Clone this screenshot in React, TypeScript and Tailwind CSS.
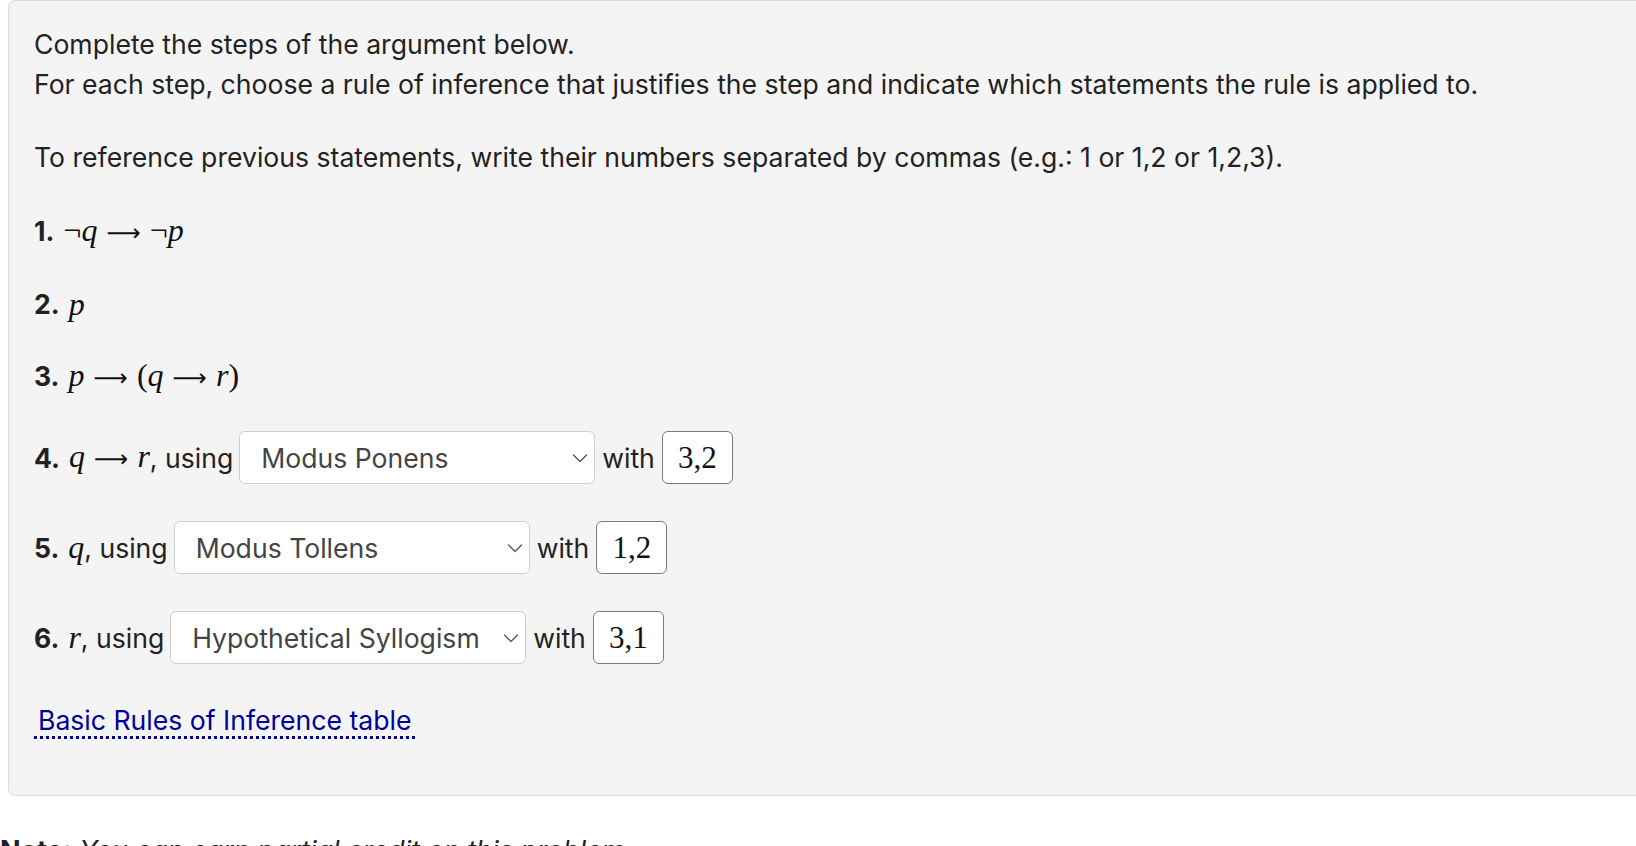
import React from 'react';

const V = ({ c }: { c: string }) => <span className="italic">{c}</span>;
const Arrow = () => (
  <span className="mx-[9px] font-['DejaVu_Sans',sans-serif] text-[24px] not-italic">⟶</span>
);
const Math = ({ children }: { children: React.ReactNode }) => (
  <span className="font-['Liberation_Serif',serif] text-[32px] text-[#111]">{children}</span>
);

interface StepProps {
  n: number;
  expr: React.ReactNode;
  rule: string;
  refs: string;
}

const Chevron = () => (
  <svg className="absolute right-[7px] top-1/2 -translate-y-1/2 w-[16px] h-[16px] pointer-events-none" viewBox="0 0 16 16" fill="none" stroke="#555" strokeWidth={1.3} strokeLinecap="round" strokeLinejoin="round">
    <path d="M1.5 5L8 11.5 14.5 5" />
  </svg>
);

const Step: React.FC<StepProps> = ({ n, expr, rule, refs }) => (
  <div className="flex items-center h-[53px]">
    <span className="font-bold">{n}.</span>
    <span className="ml-[9px]">{expr}</span>
    <span>, using</span>
    <div className="relative ml-[6px]">
      <select
        defaultValue={rule}
        className="appearance-none w-[356px] h-[53px] bg-white border-[1.5px] border-[#cfcfcf] rounded-[6px] pl-[21px] pr-8 text-[26.6px] text-[#444] font-['Inter',sans-serif] outline-none"
      >
        <option>{rule}</option>
      </select>
      <Chevron />
    </div>
    <span className="ml-[7px]">with</span>
    <input
      readOnly
      value={refs}
      className="ml-[7px] w-[71px] h-[53px] bg-white border-[1.5px] border-[#7a7a7a] rounded-[6px] text-center font-['Liberation_Serif',serif] text-[31px] text-[#111] outline-none"
    />
  </div>
);

export default function App() {
  return (
    <div className="w-[1636px] h-[846px] overflow-hidden bg-white font-['Inter',sans-serif] text-[26.6px] leading-[40px] text-[#222]">
      <div className="pl-2">
        <div className="w-[1680px] bg-[#f4f4f4] border-[1.5px] border-[#dcdcdc] rounded-[7px] pl-[25px] pt-[23px] pb-[54px] flex flex-col">
          <p>
            Complete the steps of the argument below.
            <br />
            For each step, choose a rule of inference that justifies the step and indicate which statements the rule is applied to.
          </p>
          <p className="mt-[33px]">
            To reference previous statements, write their numbers separated by commas (e.g.: 1 or 1,2 or 1,2,3).
          </p>

          <div className="mt-[34px] h-[40px] flex items-center">
            <span className="font-bold">1.</span>
            <span className="ml-[9px]">
              <Math>¬<V c="q" /><Arrow />¬<V c="p" /></Math>
            </span>
          </div>
          <div className="mt-[33px] h-[40px] flex items-center">
            <span className="font-bold">2.</span>
            <span className="ml-[9px]">
              <Math><V c="p" /></Math>
            </span>
          </div>
          <div className="mt-[32px] h-[40px] flex items-center">
            <span className="font-bold">3.</span>
            <span className="ml-[9px]">
              <Math><V c="p" /><Arrow />(<V c="q" /><Arrow /><V c="r" />)</Math>
            </span>
          </div>

          <div className="mt-[35px]">
            <Step n={4} expr={<Math><V c="q" /><Arrow /><V c="r" /></Math>} rule="Modus Ponens" refs="3,2" />
          </div>
          <div className="mt-[37px]">
            <Step n={5} expr={<Math><V c="q" /></Math>} rule="Modus Tollens" refs="1,2" />
          </div>
          <div className="mt-[37px]">
            <Step n={6} expr={<Math><V c="r" /></Math>} rule="Hypothetical Syllogism" refs="3,1" />
          </div>

          <div className="mt-[37px] h-[40px] flex">
            <a href="#" className="pl-1 pr-1 h-[38px] leading-[38px] text-[#00009e] border-b-[3px] border-dotted border-[#00009e]">
              Basic Rules of Inference table
            </a>
          </div>
        </div>
      </div>
      <p className="mt-[35px] text-[27px]">
        <span className="font-bold">Note:</span> <span className="italic">You can earn partial credit on this problem.</span>
      </p>
    </div>
  );
}
